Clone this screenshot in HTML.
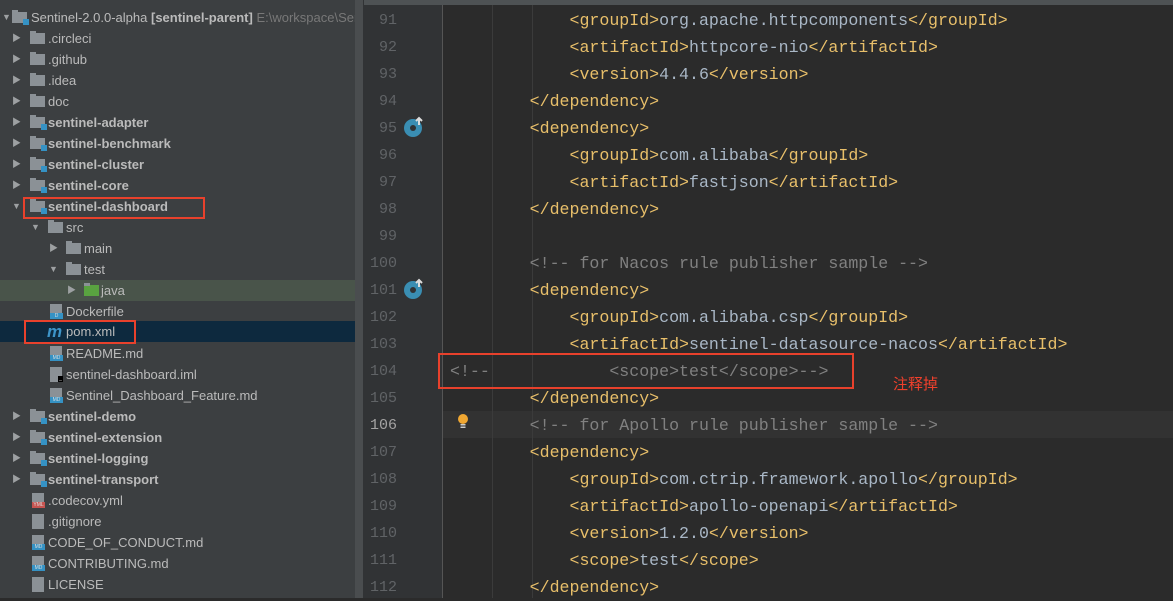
<!DOCTYPE html>
<html><head><meta charset="utf-8"><style>
*{margin:0;padding:0;box-sizing:border-box}
body{width:1173px;height:598px;overflow:hidden;background:#2b2b2b;position:relative;font-family:"Liberation Sans","Noto Sans CJK SC",sans-serif}
#tree{position:absolute;left:0;top:0;width:355px;height:598px;background:#3c3f41;overflow:hidden}
#sb{position:absolute;left:355px;top:0;width:8px;height:598px;background:#4a4d4f}
.r{position:absolute;left:0;width:355px;height:21px;line-height:21px;font-size:13px;color:#bbbbbb;white-space:nowrap}
.r b{font-weight:bold}
.ar{position:absolute;top:0;font-size:9px;color:#9da0a2}
.fd{position:absolute;top:5px;width:15px;height:11px;background:#8b9196}
.fd:before{content:"";position:absolute;left:0;top:-2px;width:6px;height:3px;background:#8b9196}
.fd i{position:absolute;right:-2px;bottom:-2px;width:6px;height:6px;background:#3592c4}
.fl{position:absolute;top:3px;width:12px;height:15px;background:#8b9196}
.fl i{position:absolute;left:0;bottom:0;width:13px;height:6px;font-size:5px;line-height:6px;color:#ddd;font-style:normal;text-align:center}
.t{position:absolute;top:0}
#ed{position:absolute;left:363px;top:0;right:0;height:598px;background:#2b2b2b}
#gut{position:absolute;left:363px;top:0;width:79px;height:598px;background:#313335}
.ln{position:absolute;left:363px;width:34px;text-align:right;font-family:"Liberation Mono",monospace;font-size:15px;color:#606366;height:27px;line-height:27px}
.cl{position:absolute;left:450px;height:27px;line-height:27px;font-family:"Liberation Mono",monospace;font-size:16.6px;white-space:pre;color:#a9b7c6}
.g{color:#e8bf6a}.c{color:#808080}
.box{position:absolute;border:2px solid #e8412c}
</style></head><body>
<div id="tree">
<div class="r" style="top:7px"><span class="ar" style="left:2px">▼</span><span class="fd" style="left:12px"><i></i></span><span class="t" style="left:31px">Sentinel-2.0.0-alpha <b>[sentinel-parent]</b> <span style="color:#787878">E:\workspace\Sentinel</span></span></div>
<div class="r" style="top:28px"><span class="ar" style="left:12px">▶</span><span class="fd" style="left:30px"></span><span class="t" style="left:48px">.circleci</span></div>
<div class="r" style="top:49px"><span class="ar" style="left:12px">▶</span><span class="fd" style="left:30px"></span><span class="t" style="left:48px">.github</span></div>
<div class="r" style="top:70px"><span class="ar" style="left:12px">▶</span><span class="fd" style="left:30px"></span><span class="t" style="left:48px">.idea</span></div>
<div class="r" style="top:91px"><span class="ar" style="left:12px">▶</span><span class="fd" style="left:30px"></span><span class="t" style="left:48px">doc</span></div>
<div class="r" style="top:112px"><span class="ar" style="left:12px">▶</span><span class="fd" style="left:30px"><i></i></span><span class="t" style="left:48px"><b>sentinel-adapter</b></span></div>
<div class="r" style="top:133px"><span class="ar" style="left:12px">▶</span><span class="fd" style="left:30px"><i></i></span><span class="t" style="left:48px"><b>sentinel-benchmark</b></span></div>
<div class="r" style="top:154px"><span class="ar" style="left:12px">▶</span><span class="fd" style="left:30px"><i></i></span><span class="t" style="left:48px"><b>sentinel-cluster</b></span></div>
<div class="r" style="top:175px"><span class="ar" style="left:12px">▶</span><span class="fd" style="left:30px"><i></i></span><span class="t" style="left:48px"><b>sentinel-core</b></span></div>
<div class="r" style="top:196px"><span class="ar" style="left:12px">▼</span><span class="fd" style="left:30px"><i></i></span><span class="t" style="left:48px"><b>sentinel-dashboard</b></span></div>
<div class="r" style="top:217px"><span class="ar" style="left:31px">▼</span><span class="fd" style="left:48px"></span><span class="t" style="left:66px">src</span></div>
<div class="r" style="top:238px"><span class="ar" style="left:49px">▶</span><span class="fd" style="left:66px"></span><span class="t" style="left:84px">main</span></div>
<div class="r" style="top:259px"><span class="ar" style="left:49px">▼</span><span class="fd" style="left:66px"></span><span class="t" style="left:84px">test</span></div>
<div class="r" style="top:280px;background:#49544a"><span class="ar" style="left:67px">▶</span><span class="fd" style="left:84px;background:#59a340"></span><span class="t" style="left:101px">java</span></div>
<div class="r" style="top:301px"><span class="fl" style="left:50px"><i style="background:#3592c4">D</i></span><span class="t" style="left:66px">Dockerfile</span></div>
<div class="r" style="top:321px;background:#0d293e"><span class="t" style="left:47px;color:#3d94c8;font-weight:bold;font-style:italic;font-size:17px">m</span><span class="t" style="left:66px">pom.xml</span></div>
<div class="r" style="top:343px"><span class="fl" style="left:50px"><i style="background:#3592c4">MD</i></span><span class="t" style="left:66px">README.md</span></div>
<div class="r" style="top:364px"><span class="fl" style="left:50px"><i style="background:#000;width:5px;left:8px">_</i></span><span class="t" style="left:66px">sentinel-dashboard.iml</span></div>
<div class="r" style="top:385px"><span class="fl" style="left:50px"><i style="background:#3592c4">MD</i></span><span class="t" style="left:66px">Sentinel_Dashboard_Feature.md</span></div>
<div class="r" style="top:406px"><span class="ar" style="left:12px">▶</span><span class="fd" style="left:30px"><i></i></span><span class="t" style="left:48px"><b>sentinel-demo</b></span></div>
<div class="r" style="top:427px"><span class="ar" style="left:12px">▶</span><span class="fd" style="left:30px"><i></i></span><span class="t" style="left:48px"><b>sentinel-extension</b></span></div>
<div class="r" style="top:448px"><span class="ar" style="left:12px">▶</span><span class="fd" style="left:30px"><i></i></span><span class="t" style="left:48px"><b>sentinel-logging</b></span></div>
<div class="r" style="top:469px"><span class="ar" style="left:12px">▶</span><span class="fd" style="left:30px"><i></i></span><span class="t" style="left:48px"><b>sentinel-transport</b></span></div>
<div class="r" style="top:490px"><span class="fl" style="left:32px"><i style="background:#c75450">YML</i></span><span class="t" style="left:48px">.codecov.yml</span></div>
<div class="r" style="top:511px"><span class="fl" style="left:32px"></span><span class="t" style="left:48px">.gitignore</span></div>
<div class="r" style="top:532px"><span class="fl" style="left:32px"><i style="background:#3592c4">MD</i></span><span class="t" style="left:48px">CODE_OF_CONDUCT.md</span></div>
<div class="r" style="top:553px"><span class="fl" style="left:32px"><i style="background:#3592c4">MD</i></span><span class="t" style="left:48px">CONTRIBUTING.md</span></div>
<div class="r" style="top:574px"><span class="fl" style="left:32px"></span><span class="t" style="left:48px">LICENSE</span></div>
</div>
<div id="sb"></div>
<div id="ed"></div>
<div id="gut"></div>
<div style="position:absolute;left:364px;top:0;right:0;height:5px;background:#4e5254"></div>
<div style="position:absolute;left:442px;top:411px;right:0;height:27px;background:#323232"></div>
<div style="position:absolute;left:442px;top:5px;width:1px;height:593px;background:#555"></div>
<div style="position:absolute;left:492px;top:5px;width:1px;height:593px;background:#3b3b3b"></div>
<div style="position:absolute;left:532px;top:5px;width:1px;height:593px;background:#3b3b3b"></div>

<div class="ln" style="top:7px">91</div><div class="ln" style="top:34px">92</div><div class="ln" style="top:61px">93</div><div class="ln" style="top:88px">94</div><div class="ln" style="top:115px">95</div><div class="ln" style="top:142px">96</div><div class="ln" style="top:169px">97</div><div class="ln" style="top:196px">98</div><div class="ln" style="top:223px">99</div><div class="ln" style="top:250px">100</div><div class="ln" style="top:277px">101</div><div class="ln" style="top:304px">102</div><div class="ln" style="top:331px">103</div><div class="ln" style="top:358px">104</div><div class="ln" style="top:385px">105</div><div class="ln" style="top:412px;color:#a4a3a3">106</div><div class="ln" style="top:439px">107</div><div class="ln" style="top:466px">108</div><div class="ln" style="top:493px">109</div><div class="ln" style="top:520px">110</div><div class="ln" style="top:547px">111</div><div class="ln" style="top:574px">112</div>

<svg style="position:absolute;left:403px;top:115px" width="24" height="24"><circle cx="10" cy="13" r="9" fill="#3a8eb3"/><circle cx="10" cy="13" r="3" fill="#313335"/><path d="M16 10V3M13 6l3-3 3 3" stroke="#ddd" stroke-width="2" fill="none"/></svg>
<svg style="position:absolute;left:403px;top:277px" width="24" height="24"><circle cx="10" cy="13" r="9" fill="#3a8eb3"/><circle cx="10" cy="13" r="3" fill="#313335"/><path d="M16 10V3M13 6l3-3 3 3" stroke="#ddd" stroke-width="2" fill="none"/></svg>
<svg style="position:absolute;left:455px;top:412px" width="16" height="18"><circle cx="8" cy="7" r="5" fill="#f0a732"/><rect x="5.5" y="12" width="5" height="1.5" fill="#ccc"/><rect x="5.5" y="14.5" width="5" height="1.5" fill="#ccc"/></svg>

<div class="cl" style="top:7px">            <span class="g">&lt;groupId&gt;</span>org.apache.httpcomponents<span class="g">&lt;/groupId&gt;</span></div>
<div class="cl" style="top:34px">            <span class="g">&lt;artifactId&gt;</span>httpcore-nio<span class="g">&lt;/artifactId&gt;</span></div>
<div class="cl" style="top:61px">            <span class="g">&lt;version&gt;</span>4.4.6<span class="g">&lt;/version&gt;</span></div>
<div class="cl" style="top:88px">        <span class="g">&lt;/dependency&gt;</span></div>
<div class="cl" style="top:115px">        <span class="g">&lt;dependency&gt;</span></div>
<div class="cl" style="top:142px">            <span class="g">&lt;groupId&gt;</span>com.alibaba<span class="g">&lt;/groupId&gt;</span></div>
<div class="cl" style="top:169px">            <span class="g">&lt;artifactId&gt;</span>fastjson<span class="g">&lt;/artifactId&gt;</span></div>
<div class="cl" style="top:196px">        <span class="g">&lt;/dependency&gt;</span></div>
<div class="cl c" style="top:250px">        &lt;!-- for Nacos rule publisher sample --&gt;</div>
<div class="cl" style="top:277px">        <span class="g">&lt;dependency&gt;</span></div>
<div class="cl" style="top:304px">            <span class="g">&lt;groupId&gt;</span>com.alibaba.csp<span class="g">&lt;/groupId&gt;</span></div>
<div class="cl" style="top:331px">            <span class="g">&lt;artifactId&gt;</span>sentinel-datasource-nacos<span class="g">&lt;/artifactId&gt;</span></div>
<div class="cl c" style="top:358px">&lt;!--            &lt;scope&gt;test&lt;/scope&gt;--&gt;</div>
<div class="cl" style="top:385px">        <span class="g">&lt;/dependency&gt;</span></div>
<div class="cl c" style="top:412px">        &lt;!-- for Apollo rule publisher sample --&gt;</div>
<div class="cl" style="top:439px">        <span class="g">&lt;dependency&gt;</span></div>
<div class="cl" style="top:466px">            <span class="g">&lt;groupId&gt;</span>com.ctrip.framework.apollo<span class="g">&lt;/groupId&gt;</span></div>
<div class="cl" style="top:493px">            <span class="g">&lt;artifactId&gt;</span>apollo-openapi<span class="g">&lt;/artifactId&gt;</span></div>
<div class="cl" style="top:520px">            <span class="g">&lt;version&gt;</span>1.2.0<span class="g">&lt;/version&gt;</span></div>
<div class="cl" style="top:547px">            <span class="g">&lt;scope&gt;</span>test<span class="g">&lt;/scope&gt;</span></div>
<div class="cl" style="top:574px">        <span class="g">&lt;/dependency&gt;</span></div>

<div class="box" style="left:23px;top:197px;width:182px;height:22px"></div>
<div class="box" style="left:24px;top:320px;width:112px;height:24px"></div>
<div class="box" style="left:438px;top:353px;width:416px;height:36px"></div>
<div style="position:absolute;left:893px;top:373px;font-size:15px;color:#f0402c;font-family:'Liberation Sans','Noto Sans CJK SC',sans-serif">注释掉</div>
</body></html>
